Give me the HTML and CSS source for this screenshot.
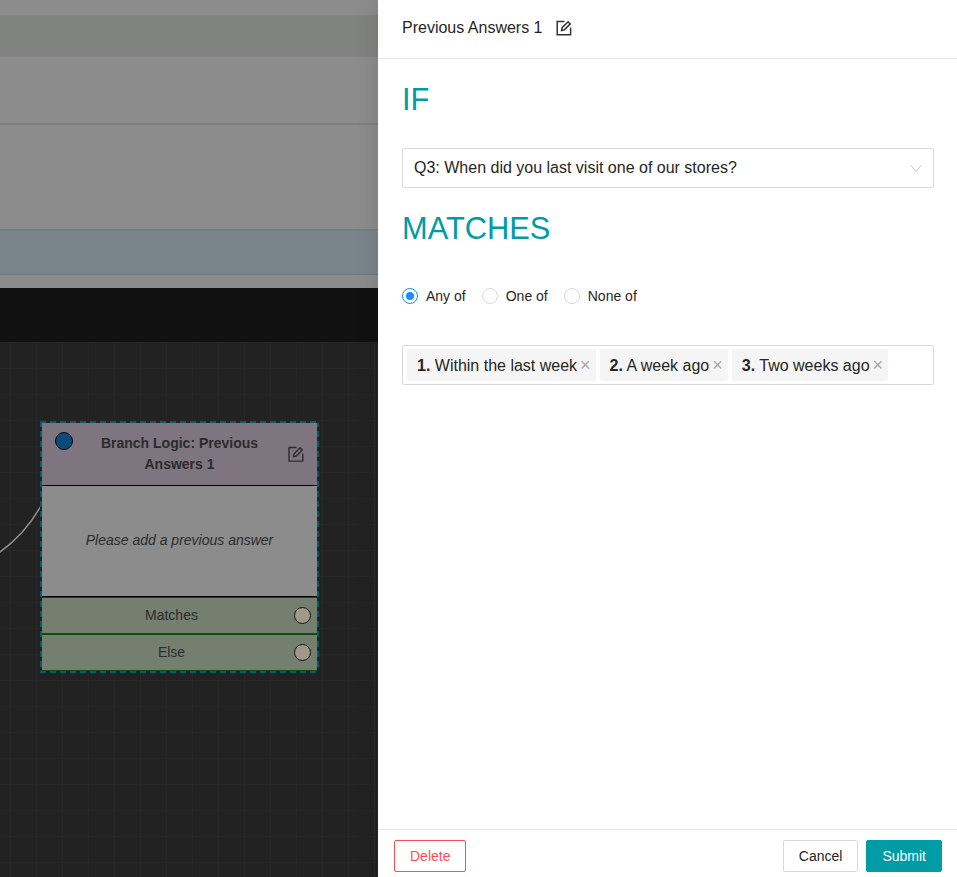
FILE: index.html
```html
<!DOCTYPE html>
<html lang="en">
<head>
<meta charset="utf-8">
<title>Previous Answers 1</title>
<link rel="stylesheet" href="styles.css">
</head>
<body>
<div class="app">
  <main class="backdrop">
    <div class="top">
      <div class="band band-gap1"></div>
      <div class="band band-grey"></div>
      <div class="band band-row"></div>
      <div class="band band-row2"></div>
      <div class="band band-blue"></div>
      <div class="band band-gap2"></div>
    </div>
    <div class="toolbar"></div>
    <div class="canvas">
      <svg class="wire" width="60" height="240" viewBox="0 0 60 240"><path d="M-6 214C16 200 30 184 42 162" fill="none" stroke="#8f8f8f" stroke-width="1.5"/></svg>
      <div class="node">
        <div class="node-head">
          <span class="dot"></span>
          <div class="node-title">Branch Logic: Previous Answers 1</div>
          <svg class="node-edit" width="18" height="18" viewBox="0 0 18 18" fill="none" stroke="#2c2c2c" stroke-width="1.4"><path d="M9.5 2.5H2v13.6h13.8V8.5"/><path d="M6.6 11.6l.5-2.8 6-6 2.2 2.2-6 6z"/></svg>
        </div>
        <div class="node-body">Please add a previous answer</div>
        <div class="node-out"><span class="out-label">Matches</span><span class="port"></span></div>
        <div class="node-out"><span class="out-label">Else</span><span class="port"></span></div>
      </div>
    </div>
  </main>
  <aside class="drawer">
    <header class="drawer-head">
      <span class="drawer-title">Previous Answers 1</span>
      <svg class="edit-icon" width="18" height="18" viewBox="0 0 18 18" fill="none" stroke="#333" stroke-width="1.5"><path d="M9.5 2.5H2.2v13.3h13.4V8.5"/><path d="M6.6 11.5l.5-2.8 6-6 2.2 2.2-6 6z"/></svg>
    </header>
    <section class="drawer-body">
      <h2 class="heading heading-if">IF</h2>
      <div class="select">
        <span>Q3: When did you last visit one of our stores?</span>
        <svg class="chevron" width="12" height="12" viewBox="0 0 12 12" fill="none" stroke="#c6c6c6" stroke-width="1"><path d="M1 3.5l5 6 5-6"/></svg>
      </div>
      <h2 class="heading heading-matches">MATCHES</h2>
      <div class="radios">
        <label class="radio"><span class="radio-dot on"></span>Any of</label>
        <label class="radio"><span class="radio-dot"></span>One of</label>
        <label class="radio"><span class="radio-dot"></span>None of</label>
      </div>
      <div class="tags">
        <span class="tag"><b>1.</b> Within the last week<i class="x">×</i></span>
        <span class="tag"><b>2.</b> A week ago<i class="x">×</i></span>
        <span class="tag"><b>3.</b> Two weeks ago<i class="x">×</i></span>
      </div>
    </section>
    <footer class="drawer-foot">
      <button class="btn btn-danger">Delete</button>
      <div class="foot-right">
        <button class="btn">Cancel</button>
        <button class="btn btn-primary">Submit</button>
      </div>
    </footer>
  </aside>
</div>
</body>
</html>
```
FILE: styles.css
```css
* { box-sizing: border-box; }
html, body { margin: 0; height: 100%; overflow: hidden; }
body { font-family: "Liberation Sans", Arial, sans-serif; color: #262626; }
.app { display: flex; width: 957px; height: 877px; }
.backdrop { width: 378px; flex: none; display: flex; flex-direction: column; background: #8c8c8c; }
.top { height: 288px; flex: none; display: flex; flex-direction: column; }
.band-gap1 { height: 15px; }
.band-grey { height: 42px; background: #808380; }
.band-row { height: 68px; border-bottom: 2px solid #7f7f7f; }
.band-row2 { height: 104px; }
.band-blue { height: 46px; background: #7a858b; border-top: 2px solid #6f7f85; border-bottom: 1px solid #6c777d; }
.band-gap2 { height: 13px; }
.toolbar { height: 54px; flex: none; background: #111; }
.canvas {
  position: relative; flex: 1; padding: 79px 0 0 40px;
  background-color: #222;
  background-image: linear-gradient(90deg, #262626 1px, transparent 1px), linear-gradient(#262626 1px, transparent 1px);
  background-size: 26px 26px;
  background-position: 10px 0;
}
.wire { position: absolute; left: 0; top: 0; }
.node { position: relative; width: 279px; height: 252px; padding: 2px; display: flex; flex-direction: column; background: #8c8c8c; }
.node::after {
  content: ""; position: absolute; inset: 0; pointer-events: none;
  background:
    repeating-linear-gradient(90deg, #005f68 0 6px, #222 6px 10px) top left / 100% 2px no-repeat,
    repeating-linear-gradient(90deg, #005f68 0 6px, #222 6px 10px) bottom left / 100% 2px no-repeat,
    repeating-linear-gradient(#005f68 0 6px, #222 6px 10px) top left / 2px 100% no-repeat,
    repeating-linear-gradient(#005f68 0 6px, #222 6px 10px) top right / 2px 100% no-repeat;
}
.node-head { position: relative; height: 63px; flex: none; background: #7f7581; border-bottom: 1px solid #000; padding: 10px 52px; }
.dot { position: absolute; left: 13px; top: 9px; width: 18px; height: 18px; border-radius: 50%; background: #0c4a7c; border: 1px solid #0a0a0a; }
.node-title { font-size: 14px; font-weight: bold; line-height: 21px; text-align: center; color: #2b2b2b; }
.node-edit { position: absolute; right: 12px; top: 22px; }
.node-body { height: 111px; flex: none; display: flex; align-items: center; justify-content: center; padding-bottom: 2px; font-size: 14px; font-style: italic; color: #2b2b2b; border-bottom: 1px solid #000; }
.node-out { position: relative; height: 38px; flex: none; display: flex; align-items: center; justify-content: center; padding: 0 16px 2px 0; background: #757f70; border-top: 1px solid #0d4d0d; border-bottom: 2px solid #0d4d0d; font-size: 14px; color: #2d2d2d; }
.node-out:last-child { height: 36px; border-top: 0; border-bottom-width: 1px; }
.port { position: absolute; right: 6px; top: 9px; width: 17px; height: 17px; border-radius: 50%; background: #a0998a; border: 1px solid #111; }
.drawer { position: relative; flex: 1; display: flex; flex-direction: column; background: #fff; box-shadow: -6px 0 16px rgba(0,0,0,.08); }
.drawer-head { height: 59px; flex: none; display: flex; align-items: center; gap: 12px; padding: 0 24px 2px; border-bottom: 1px solid #e8e8e8; }
.drawer-title { font-size: 16px; color: #262626; }
.drawer-body { flex: 1; padding: 0 23px 0 24px; }
.heading { margin: 0; font-weight: normal; font-size: 30.8px; line-height: 36px; color: #009ca6; }
.heading-if { padding-top: 23px; height: 89px; }
.heading-matches { padding-top: 23px; height: 80px; }
.select { height: 40px; display: flex; align-items: center; justify-content: space-between; padding: 0 11px; border: 1px solid #d9d9d9; border-radius: 2px; font-size: 16px; }
.radios { display: flex; gap: 16px; height: 77px; padding-top: 20px; }
.radio { display: flex; align-items: center; gap: 8px; font-size: 14px; height: 16px; }
.radio-dot { position: relative; width: 16px; height: 16px; border-radius: 50%; border: 1px solid #d9d9d9; background: #fff; }
.radio-dot.on { border-color: #1890ff; }
.radio-dot.on::after { content: ""; position: absolute; left: 3px; top: 3px; width: 8px; height: 8px; border-radius: 50%; background: #1890ff; }
.tags { height: 40px; display: flex; align-items: center; gap: 4px; padding: 0 4px; border: 1px solid #d9d9d9; border-radius: 2px; font-size: 16px; }
.tag { height: 32px; display: flex; align-items: center; padding: 1px 5px 0 10px; background: #f5f5f5; border-radius: 2px; white-space: pre; }
.tag b { font-weight: bold; }
.x { font-style: normal; font-size: 18px; color: #a6a6a6; margin-left: 3px; }
.drawer-foot { height: 48px; flex: none; display: flex; justify-content: space-between; align-items: flex-start; padding: 10px 15px 0 16px; border-top: 1px solid #e8e8e8; }
.foot-right { display: flex; gap: 8px; }
.btn { height: 32px; padding: 0 15px; font: 14px "Liberation Sans", Arial, sans-serif; color: #262626; background: #fff; border: 1px solid #d9d9d9; border-radius: 2px; }
.btn-danger { color: #ff4d4f; border-color: #ff4d4f; }
.btn-primary { color: #fff; background: #009ca6; border-color: #009ca6; }
```
